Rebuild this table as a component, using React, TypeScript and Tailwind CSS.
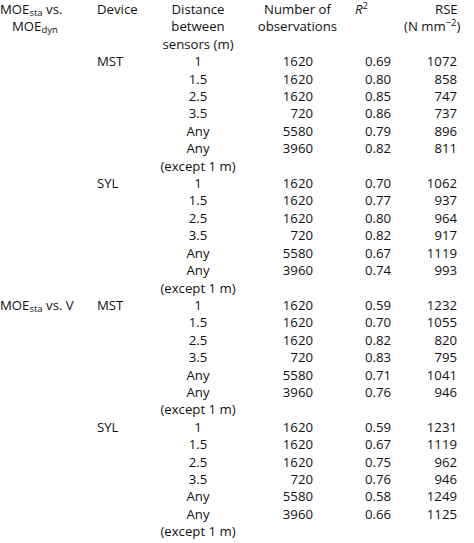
import React from 'react'

type Row = {
  ratio?: React.ReactNode
  device?: string
  dist: string
  n?: string
  r2?: string
  rse?: string
}

const sub = (s: string) => (
  <span className="relative top-[2px] text-[9.5px] leading-none align-baseline">{s}</span>
)
const sup = (s: string) => (
  <span className="relative top-[-5px] text-[9.5px] leading-none align-baseline">{s}</span>
)

const group = (device: string, values: [string, string, string, string][]): Row[] => {
  const rows: Row[] = values.map(([dist, n, r2, rse], i) => ({
    device: i === 0 ? device : undefined,
    dist,
    n,
    r2,
    rse,
  }))
  rows.push({ dist: '(except 1 m)' })
  return rows
}

const rows: Row[] = [
  ...group('MST', [
    ['1', '1620', '0.69', '1072'],
    ['1.5', '1620', '0.80', '858'],
    ['2.5', '1620', '0.85', '747'],
    ['3.5', '720', '0.86', '737'],
    ['Any', '5580', '0.79', '896'],
    ['Any', '3960', '0.82', '811'],
  ]),
  ...group('SYL', [
    ['1', '1620', '0.70', '1062'],
    ['1.5', '1620', '0.77', '937'],
    ['2.5', '1620', '0.80', '964'],
    ['3.5', '720', '0.82', '917'],
    ['Any', '5580', '0.67', '1119'],
    ['Any', '3960', '0.74', '993'],
  ]),
  ...group('MST', [
    ['1', '1620', '0.59', '1232'],
    ['1.5', '1620', '0.70', '1055'],
    ['2.5', '1620', '0.82', '820'],
    ['3.5', '720', '0.83', '795'],
    ['Any', '5580', '0.71', '1041'],
    ['Any', '3960', '0.76', '946'],
  ]),
  ...group('SYL', [
    ['1', '1620', '0.59', '1231'],
    ['1.5', '1620', '0.67', '1119'],
    ['2.5', '1620', '0.75', '962'],
    ['3.5', '720', '0.76', '946'],
    ['Any', '5580', '0.58', '1249'],
    ['Any', '3960', '0.66', '1125'],
  ]),
]

rows[14].ratio = (
  <>
    MOE{sub('sta')} vs. V
  </>
)

const cols = 'grid grid-cols-[97px_63px_76px_119px_40px_79px]'

export default function App() {
  return (
    <div
      className="w-[474px] h-[543px] overflow-hidden bg-white text-[#111] text-[13.2px] leading-[17.4px] pt-[1px] whitespace-nowrap"
      style={{ fontFamily: '"Open Sans", "Noto Sans", sans-serif' }}
    >
      {/* Header */}
      <div className={cols}>
        <div>
          <div>MOE{sub('sta')} vs.</div>
          <div className="pl-[12px]">MOE{sub('dyn')}</div>
        </div>
        <div>Device</div>
        <div className="flex flex-col items-center">
          <div>Distance</div>
          <div>between</div>
          <div>sensors (m)</div>
        </div>
        <div className="flex flex-col items-center pl-[4px]">
          <div>Number of</div>
          <div>observations</div>
        </div>
        <div>
          <i>R</i>
          {sup('2')}
        </div>
        <div>
          <div className="pl-[40px]">RSE</div>
          <div className="pl-[9px]">(N mm{sup('−2')})</div>
        </div>
      </div>

      {/* Body */}
      {rows.map((r, i) => (
        <div key={i} className={cols}>
          <div>{r.ratio}</div>
          <div>{r.device}</div>
          <div className="text-center">{r.dist}</div>
          <div className="text-right pr-[42px]">{r.n}</div>
          <div className="text-right pr-[4px]">{r.r2}</div>
          <div className="text-right pr-[17px]">{r.rse}</div>
        </div>
      ))}
    </div>
  )
}
